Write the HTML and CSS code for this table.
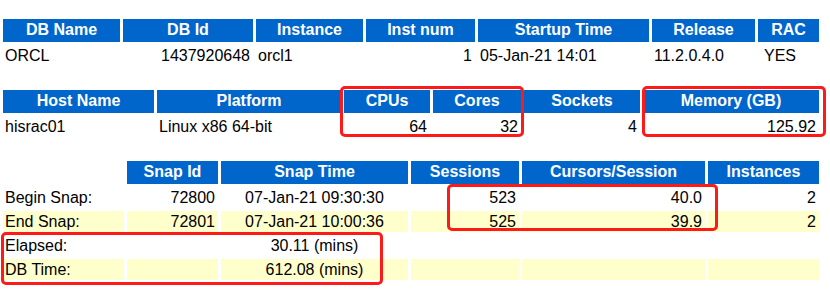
FILE: index.html
```html
<!DOCTYPE html>
<html>
<head>
<meta charset="utf-8">
<link rel="stylesheet" href="styles.css">
</head>
<body>
<div class="page">
<table class="tdiff t1">
<tr>
<th class="c-dbname">DB Name</th>
<th class="c-dbid">DB Id</th>
<th class="c-inst">Instance</th>
<th class="c-instnum">Inst num</th>
<th class="c-startup">Startup Time</th>
<th class="c-release">Release</th>
<th class="c-rac">RAC</th>
</tr>
<tr>
<td>ORCL</td>
<td class="num">1437920648</td>
<td>orcl1</td>
<td class="num">1</td>
<td>05-Jan-21 14:01</td>
<td>11.2.0.4.0</td>
<td class="rac">YES</td>
</tr>
</table>

<table class="tdiff t2">
<tr>
<th class="c-host">Host Name</th>
<th class="c-platform">Platform</th>
<th class="c-cpus">CPUs</th>
<th class="c-cores">Cores</th>
<th class="c-sockets">Sockets</th>
<th class="c-memory">Memory (GB)</th>
</tr>
<tr>
<td>hisrac01</td>
<td>Linux x86 64-bit</td>
<td class="num">64</td>
<td class="num">32</td>
<td class="num">4</td>
<td class="num">125.92</td>
</tr>
</table>

<table class="tdiff t3">
<tr>
<th class="blank c-label"></th>
<th class="c-snapid">Snap Id</th>
<th class="c-snaptime">Snap Time</th>
<th class="c-sessions">Sessions</th>
<th class="c-cursors">Cursors/Session</th>
<th class="c-instances">Instances</th>
</tr>
<tr>
<td>Begin Snap:</td>
<td class="num">72800</td>
<td class="ctr">07-Jan-21 09:30:30</td>
<td class="num">523</td>
<td class="num">40.0</td>
<td class="num">2</td>
</tr>
<tr class="alt">
<td>End Snap:</td>
<td class="num">72801</td>
<td class="ctr">07-Jan-21 10:00:36</td>
<td class="num">525</td>
<td class="num">39.9</td>
<td class="num">2</td>
</tr>
<tr>
<td>Elapsed:</td>
<td></td>
<td class="ctr">30.11 (mins)</td>
<td></td>
<td></td>
<td></td>
</tr>
<tr class="alt">
<td>DB Time:</td>
<td></td>
<td class="ctr">612.08 (mins)</td>
<td></td>
<td></td>
<td></td>
</tr>
</table>

<div class="mark m1"></div>
<div class="mark m2"></div>
<div class="mark m3"></div>
<div class="mark m4"></div>
</div>
</body>
</html>
```

FILE: styles.css
```css
html, body {
  margin: 0;
  padding: 0;
  background: #ffffff;
}

.page {
  position: relative;
  width: 830px;
  height: 289px;
  padding-top: 16px;
  box-sizing: border-box;
  font-family: "Liberation Sans", Arial, sans-serif;
  font-size: 16px;
  color: #000000;
}

.tdiff {
  border-collapse: separate;
  border-spacing: 3px;
  table-layout: fixed;
  margin: 0 0 18px 0;
}

.tdiff th {
  background: #0066cc;
  color: #ffffff;
  font-weight: bold;
  height: 23px;
  padding: 0 2px 1px 2px;
  line-height: 20px;
  box-sizing: border-box;
  text-align: center;
  vertical-align: middle;
  white-space: nowrap;
}

.tdiff th.blank {
  background: #ffffff;
}

.tdiff td {
  height: 21px;
  padding: 0 2px 0 2px;
  line-height: 21px;
  box-sizing: border-box;
  background: #ffffff;
  white-space: nowrap;
  vertical-align: middle;
}

.tdiff tr.alt td {
  background: #ffffcc;
}

.tdiff td.num {
  text-align: right;
  padding-right: 3px;
}

.tdiff td.ctr {
  text-align: center;
}

.tdiff td.rac {
  padding-left: 6px;
}

/* table 1 columns */
.c-dbname { width: 117px; }
.c-dbid { width: 130px; }
.c-inst { width: 107px; }
.c-instnum { width: 109px; }
.c-startup { width: 171px; }
.c-release { width: 103px; }
.c-rac { width: 61px; }

/* table 2 columns */
.c-host { width: 151px; }
.c-platform { width: 184px; }
.c-cpus { width: 86px; }
.c-cores { width: 88px; }
.c-sockets { width: 116px; }
.c-memory { width: 176px; }

/* table 3 columns */
.c-label { width: 121px; }
.c-snapid { width: 91px; }
.c-snaptime { width: 187px; }
.c-sessions { width: 108px; }
.c-cursors { width: 183px; }
.c-instances { width: 111px; }

/* red annotation boxes drawn over the report */
.mark {
  position: absolute;
  border: 3px solid #ff1a1a;
  border-radius: 5px;
  box-sizing: border-box;
}

.m1 { left: 340px; top: 86px; width: 184px; height: 51px; }
.m2 { left: 642px; top: 86px; width: 184px; height: 51px; }
.m3 { left: 447px; top: 184px; width: 271px; height: 47px; }
.m4 { left: 1px; top: 232px; width: 382px; height: 53px; }
```
